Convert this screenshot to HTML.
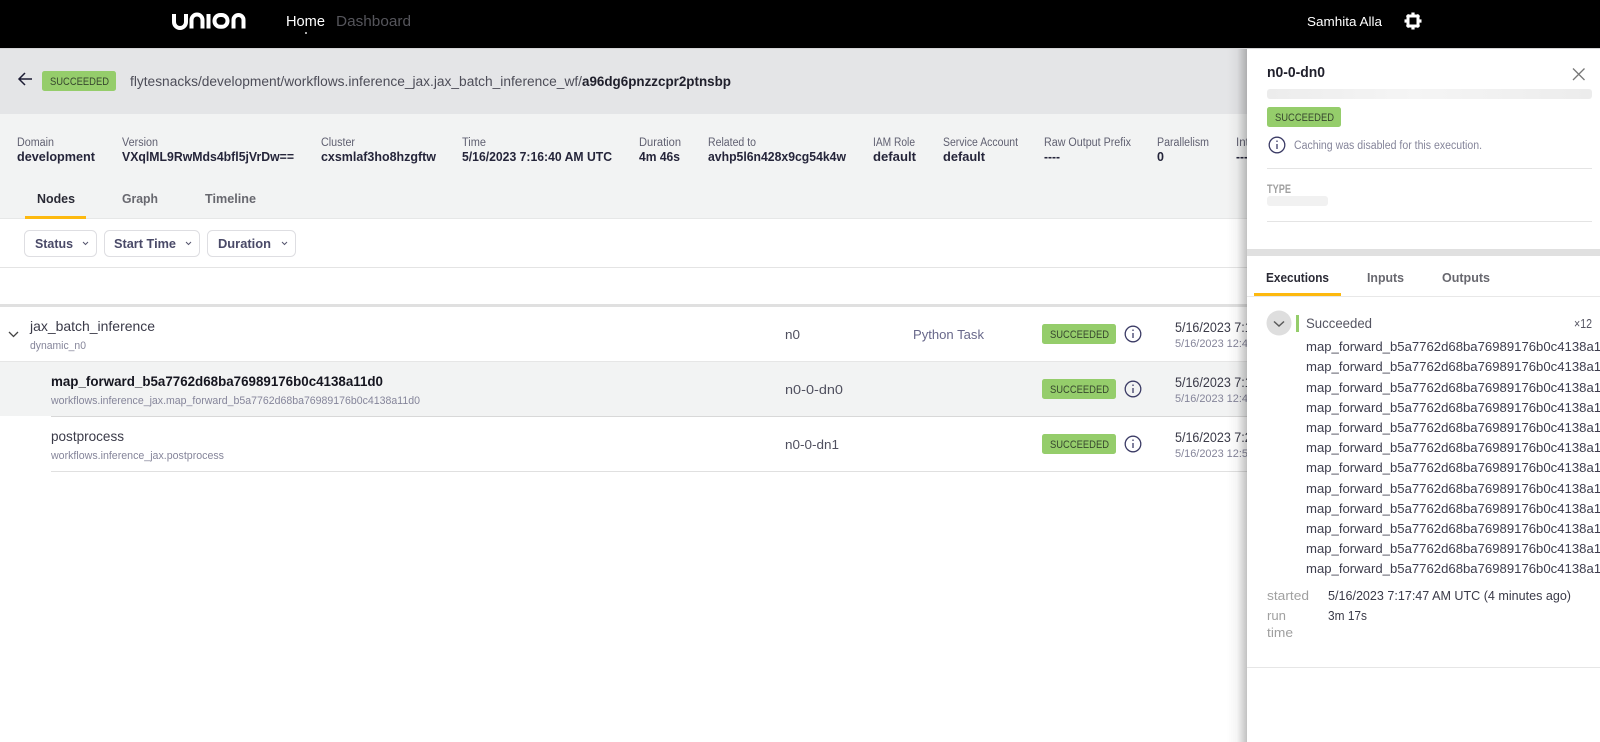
<!DOCTYPE html>
<html lang="en"><head><meta charset="utf-8"><title>Union</title>
<style>
html,body{margin:0;padding:0;width:1600px;height:742px;overflow:hidden;background:#fff}
svg{display:block;filter:blur(.3px)}
text{font-family:"Liberation Sans",sans-serif;white-space:pre}
.lb{font-size:11.5px;fill:#5f5f70}
.v{font-size:12.5px;font-weight:bold;fill:#25253a}
.tab{font-size:13px;font-weight:bold;fill:#68686f}
.fl{font-size:13px;font-weight:bold;fill:#4a4a68}
.bd{font-size:11px;fill:#37472e}
.nm{font-size:14px;fill:#3a3a48}
.sub{font-size:11px;fill:#85859a}
.id{font-size:13px;fill:#50505f}
.dt{font-size:13.5px;fill:#3a3a48}
.ex{font-size:13px;fill:#3d3d4d}
</style></head><body>
<svg width="1600" height="742" viewBox="0 0 1600 742" xmlns="http://www.w3.org/2000/svg">
<defs>
<linearGradient id="sh" x1="0" x2="1" y1="0" y2="0"><stop offset="0" stop-color="#000" stop-opacity="0"/><stop offset=".5" stop-color="#000" stop-opacity=".04"/><stop offset="1" stop-color="#000" stop-opacity=".24"/></linearGradient>
<linearGradient id="sk" x1="0" x2="1" y1="0" y2="0"><stop offset="0" stop-color="#ececec"/><stop offset=".45" stop-color="#f5f5f5"/><stop offset="1" stop-color="#ececec"/></linearGradient>
<clipPath id="pc"><rect x="1247" y="48" width="353" height="694"/></clipPath>
</defs>
<rect width="1600" height="742" fill="#fff"/>
<rect y="48" width="1600" height="66" fill="#e4e5e7"/>
<rect y="114" width="1600" height="105" fill="#f2f3f3"/>
<rect y="218" width="1600" height="1" fill="#e6e7e7"/>

<!-- header row -->
<path d="M32 79H19M25 73l-6 6 6 6" fill="none" stroke="#1c1c34" stroke-width="1.5"/>
<rect x="42" y="71" width="74" height="20" rx="2.5" fill="#95cd6b"/>
<text class="bd" x="50" y="85" textLength="59" lengthAdjust="spacingAndGlyphs">SUCCEEDED</text>
<text x="130" y="86" font-size="13.5" fill="#4d4d58" textLength="452" lengthAdjust="spacingAndGlyphs">flytesnacks/development/workflows.inference_jax.jax_batch_inference_wf/</text>
<text x="582" y="86" font-size="13.5" font-weight="bold" fill="#20202c" textLength="149" lengthAdjust="spacingAndGlyphs">a96dg6pnzzcpr2ptnsbp</text>

<!-- meta -->
<text class="lb" x="17" y="146" textLength="37" lengthAdjust="spacingAndGlyphs">Domain</text>
<text class="v" x="17" y="161" textLength="78" lengthAdjust="spacingAndGlyphs">development</text>
<text class="lb" x="122" y="146" textLength="36" lengthAdjust="spacingAndGlyphs">Version</text>
<text class="v" x="122" y="161" textLength="172" lengthAdjust="spacingAndGlyphs">VXqlML9RwMds4bfl5jVrDw==</text>
<text class="lb" x="321" y="146" textLength="34" lengthAdjust="spacingAndGlyphs">Cluster</text>
<text class="v" x="321" y="161" textLength="115" lengthAdjust="spacingAndGlyphs">cxsmlaf3ho8hzgftw</text>
<text class="lb" x="462" y="146" textLength="24" lengthAdjust="spacingAndGlyphs">Time</text>
<text class="v" x="462" y="161" textLength="150" lengthAdjust="spacingAndGlyphs">5/16/2023 7:16:40 AM UTC</text>
<text class="lb" x="639" y="146" textLength="42" lengthAdjust="spacingAndGlyphs">Duration</text>
<text class="v" x="639" y="161" textLength="41" lengthAdjust="spacingAndGlyphs">4m 46s</text>
<text class="lb" x="708" y="146" textLength="48" lengthAdjust="spacingAndGlyphs">Related to</text>
<text class="v" x="708" y="161" textLength="138" lengthAdjust="spacingAndGlyphs">avhp5l6n428x9cg54k4w</text>
<text class="lb" x="873" y="146" textLength="42" lengthAdjust="spacingAndGlyphs">IAM Role</text>
<text class="v" x="873" y="161" textLength="43" lengthAdjust="spacingAndGlyphs">default</text>
<text class="lb" x="943" y="146" textLength="75" lengthAdjust="spacingAndGlyphs">Service Account</text>
<text class="v" x="943" y="161" textLength="42" lengthAdjust="spacingAndGlyphs">default</text>
<text class="lb" x="1044" y="146" textLength="87" lengthAdjust="spacingAndGlyphs">Raw Output Prefix</text>
<text class="v" x="1044" y="161" textLength="16" lengthAdjust="spacingAndGlyphs">----</text>
<text class="lb" x="1157" y="146" textLength="52" lengthAdjust="spacingAndGlyphs">Parallelism</text>
<text class="v" x="1157" y="161">0</text>
<text class="lb" x="1236" y="146">Int</text>
<text class="v" x="1236" y="161" textLength="16" lengthAdjust="spacingAndGlyphs">----</text>

<!-- tabs -->
<text class="tab" x="37" y="203" style="fill:#2a2a35" textLength="38" lengthAdjust="spacingAndGlyphs">Nodes</text>
<text class="tab" x="122" y="203" textLength="36" lengthAdjust="spacingAndGlyphs">Graph</text>
<text class="tab" x="205" y="203" textLength="51" lengthAdjust="spacingAndGlyphs">Timeline</text>
<rect x="25" y="216" width="61" height="3" fill="#fdb90f"/>

<!-- filters -->
<g fill="#fff" stroke="#dedee2"><rect x="24.5" y="230.5" width="72" height="26" rx="5"/><rect x="104.5" y="230.5" width="95" height="26" rx="5"/><rect x="207.5" y="230.5" width="88" height="26" rx="5"/></g>
<text class="fl" x="35" y="248" textLength="38" lengthAdjust="spacingAndGlyphs">Status</text>
<text class="fl" x="114" y="248" textLength="62" lengthAdjust="spacingAndGlyphs">Start Time</text>
<text class="fl" x="218" y="248" textLength="53" lengthAdjust="spacingAndGlyphs">Duration</text>
<g fill="none" stroke="#55556e" stroke-width="1"><path d="M83 242l2.5 2.5L88 242"/><path d="M186 242l2.5 2.5L191 242"/><path d="M282 242l2.5 2.5L287 242"/></g>

<rect y="267" width="1600" height="1" fill="#e4e4e4"/>
<rect y="304" width="1600" height="3" fill="#e0e0e0"/>

<!-- rows -->
<rect y="362" width="1600" height="54" fill="#f2f3f3"/>
<rect y="361" width="1600" height="1" fill="#e6e6e6"/>
<rect x="51" y="416" width="1549" height="1" fill="#d8d8d8"/>
<rect x="51" y="471" width="1549" height="1" fill="#e0e0e0"/>
<path d="M9 332l4.500 4.500L18 332" fill="none" stroke="#444" stroke-width="1.3"/>

<text class="nm" x="30" y="331" textLength="125" lengthAdjust="spacingAndGlyphs">jax_batch_inference</text>
<text class="sub" x="30" y="349" textLength="56" lengthAdjust="spacingAndGlyphs">dynamic_n0</text>
<text class="nm" x="51" y="386" font-weight="bold" style="fill:#15151f" textLength="332" lengthAdjust="spacingAndGlyphs">map_forward_b5a7762d68ba76989176b0c4138a11d0</text>
<text class="sub" x="51" y="404" textLength="369" lengthAdjust="spacingAndGlyphs">workflows.inference_jax.map_forward_b5a7762d68ba76989176b0c4138a11d0</text>
<text class="nm" x="51" y="441" textLength="73" lengthAdjust="spacingAndGlyphs">postprocess</text>
<text class="sub" x="51" y="459" textLength="173" lengthAdjust="spacingAndGlyphs">workflows.inference_jax.postprocess</text>

<text class="id" x="785" y="339" textLength="15" lengthAdjust="spacingAndGlyphs">n0</text>
<text class="id" x="785" y="394" textLength="58" lengthAdjust="spacingAndGlyphs">n0-0-dn0</text>
<text class="id" x="785" y="449" textLength="54" lengthAdjust="spacingAndGlyphs">n0-0-dn1</text>
<text x="913" y="339" font-size="13" fill="#68688a" textLength="71" lengthAdjust="spacingAndGlyphs">Python Task</text>

<g fill="#95cd6b"><rect x="1042" y="324" width="74" height="20" rx="2.500"/><rect x="1042" y="379" width="74" height="20" rx="2.500"/><rect x="1042" y="434" width="74" height="20" rx="2.500"/></g>
<text class="bd" x="1050" y="338" textLength="59" lengthAdjust="spacingAndGlyphs">SUCCEEDED</text>
<text class="bd" x="1050" y="393" textLength="59" lengthAdjust="spacingAndGlyphs">SUCCEEDED</text>
<text class="bd" x="1050" y="448" textLength="59" lengthAdjust="spacingAndGlyphs">SUCCEEDED</text>
<g fill="none" stroke="#3c3c66" stroke-width="1.300">
<circle cx="1133" cy="334" r="7.800"/><path d="M1133 333v5M1133 329.500v1.500"/>
<circle cx="1133" cy="389" r="7.800"/><path d="M1133 388v5M1133 384.500v1.500"/>
<circle cx="1133" cy="444" r="7.800"/><path d="M1133 443v5M1133 439.500v1.500"/>
</g>
<text class="dt" x="1175" y="332" textLength="152" lengthAdjust="spacingAndGlyphs">5/16/2023 7:16:40 AM UTC</text>
<text class="sub" x="1175" y="347" textLength="138" lengthAdjust="spacingAndGlyphs">5/16/2023 12:46:40 AM PDT</text>
<text class="dt" x="1175" y="387" textLength="152" lengthAdjust="spacingAndGlyphs">5/16/2023 7:17:47 AM UTC</text>
<text class="sub" x="1175" y="402" textLength="138" lengthAdjust="spacingAndGlyphs">5/16/2023 12:47:47 AM PDT</text>
<text class="dt" x="1175" y="442" textLength="152" lengthAdjust="spacingAndGlyphs">5/16/2023 7:21:04 AM UTC</text>
<text class="sub" x="1175" y="457" textLength="138" lengthAdjust="spacingAndGlyphs">5/16/2023 12:51:04 AM PDT</text>

<!-- panel shadow + panel -->
<rect x="1227" y="48" width="20" height="694" fill="url(#sh)"/>
<rect x="1247" y="48" width="353" height="694" fill="#fff"/>

<text x="1267" y="77" font-size="14.500" font-weight="bold" fill="#1f1f2b" textLength="58" lengthAdjust="spacingAndGlyphs">n0-0-dn0</text>
<path d="M1573 68.500l11.500 11.500M1584.500 68.500L1573 80" stroke="#777" stroke-width="1.300" fill="none"/>
<rect x="1267" y="89" width="325" height="10" rx="3" fill="url(#sk)"/>
<rect x="1267" y="107" width="74" height="20" rx="2.500" fill="#95cd6b"/>
<text class="bd" x="1275" y="121" textLength="59" lengthAdjust="spacingAndGlyphs">SUCCEEDED</text>
<circle cx="1277" cy="145" r="7.800" fill="none" stroke="#3c3c66" stroke-width="1.300"/>
<path d="M1277 144v5M1277 140.500v1.500" stroke="#3c3c66" stroke-width="1.300" fill="none"/>
<text x="1294" y="149" font-size="11.500" fill="#85859a" textLength="188" lengthAdjust="spacingAndGlyphs">Caching was disabled for this execution.</text>
<rect x="1267" y="168" width="325" height="1" fill="#e4e4e4"/>
<text x="1267" y="193" font-size="11.500" font-weight="bold" fill="#a0a0a0" textLength="24" lengthAdjust="spacingAndGlyphs">TYPE</text>
<rect x="1267" y="196" width="61" height="10" rx="3" fill="#f1f1f1"/>
<rect x="1267" y="221" width="325" height="1" fill="#e4e4e4"/>
<rect x="1247" y="249" width="353" height="7" fill="#e0e0e0"/>

<text class="tab" x="1266" y="282" style="fill:#2a2a35" textLength="63" lengthAdjust="spacingAndGlyphs">Executions</text>
<text class="tab" x="1367" y="282" textLength="37" lengthAdjust="spacingAndGlyphs">Inputs</text>
<text class="tab" x="1442" y="282" textLength="48" lengthAdjust="spacingAndGlyphs">Outputs</text>
<rect x="1247" y="296" width="353" height="1" fill="#e8e8e8"/>
<rect x="1254" y="293" width="87" height="3" fill="#fdb90f"/>

<circle cx="1279" cy="323" r="12.500" fill="#dedede"/>
<path d="M1274 321.500l5 4.500 5-4.500" fill="none" stroke="#5a5a5a" stroke-width="1.500"/>
<rect x="1296" y="315" width="3" height="17" fill="#95cd6b"/>
<text x="1306" y="328" font-size="13.500" fill="#555562" textLength="66" lengthAdjust="spacingAndGlyphs">Succeeded</text>
<text x="1574" y="328" font-size="13" fill="#555562" textLength="18" lengthAdjust="spacingAndGlyphs">×12</text>

<g clip-path="url(#pc)">
<text class="ex" x="1306" y="351" textLength="316" lengthAdjust="spacingAndGlyphs">map_forward_b5a7762d68ba76989176b0c4138a11d0</text>
<text class="ex" x="1306" y="371" textLength="316" lengthAdjust="spacingAndGlyphs">map_forward_b5a7762d68ba76989176b0c4138a11d0</text>
<text class="ex" x="1306" y="392" textLength="316" lengthAdjust="spacingAndGlyphs">map_forward_b5a7762d68ba76989176b0c4138a11d0</text>
<text class="ex" x="1306" y="412" textLength="316" lengthAdjust="spacingAndGlyphs">map_forward_b5a7762d68ba76989176b0c4138a11d0</text>
<text class="ex" x="1306" y="432" textLength="316" lengthAdjust="spacingAndGlyphs">map_forward_b5a7762d68ba76989176b0c4138a11d0</text>
<text class="ex" x="1306" y="452" textLength="316" lengthAdjust="spacingAndGlyphs">map_forward_b5a7762d68ba76989176b0c4138a11d0</text>
<text class="ex" x="1306" y="472" textLength="316" lengthAdjust="spacingAndGlyphs">map_forward_b5a7762d68ba76989176b0c4138a11d0</text>
<text class="ex" x="1306" y="493" textLength="316" lengthAdjust="spacingAndGlyphs">map_forward_b5a7762d68ba76989176b0c4138a11d0</text>
<text class="ex" x="1306" y="513" textLength="316" lengthAdjust="spacingAndGlyphs">map_forward_b5a7762d68ba76989176b0c4138a11d0</text>
<text class="ex" x="1306" y="533" textLength="316" lengthAdjust="spacingAndGlyphs">map_forward_b5a7762d68ba76989176b0c4138a11d0</text>
<text class="ex" x="1306" y="553" textLength="316" lengthAdjust="spacingAndGlyphs">map_forward_b5a7762d68ba76989176b0c4138a11d0</text>
<text class="ex" x="1306" y="573" textLength="316" lengthAdjust="spacingAndGlyphs">map_forward_b5a7762d68ba76989176b0c4138a11d0</text>
</g>

<text x="1267" y="600" font-size="13" fill="#a0a0a0" textLength="42" lengthAdjust="spacingAndGlyphs">started</text>
<text x="1328" y="600" font-size="13" fill="#3a3a48" textLength="243" lengthAdjust="spacingAndGlyphs">5/16/2023 7:17:47 AM UTC (4 minutes ago)</text>
<text x="1267" y="620" font-size="13" fill="#a0a0a0" textLength="19" lengthAdjust="spacingAndGlyphs">run</text>
<text x="1328" y="620" font-size="13" fill="#3a3a48" textLength="39" lengthAdjust="spacingAndGlyphs">3m 17s</text>
<text x="1267" y="637" font-size="13" fill="#a0a0a0" textLength="26" lengthAdjust="spacingAndGlyphs">time</text>
<rect x="1247" y="667" width="353" height="1" fill="#e6e6e6"/>

<!-- nav -->
<rect width="1600" height="48" fill="#000"/>
<rect y="48" width="1600" height="1" fill="#d4d4d6"/>
<g fill="none" stroke="#fff" stroke-width="4" transform="translate(-.8 0)">
<path d="M174.800 14v8a6 6 0 0 0 12 0v-8"/>
<path d="M192.300 28.500v-8.500a5.500 5.500 0 0 1 11 0v8.500"/>
<path d="M209.300 14v14.500"/>
<rect x="215.300" y="15" width="13" height="11.800" rx="5.700"/>
<path d="M234.300 28.500v-8.500a5 5 0 0 1 10 0v8.500"/>
</g>
<text x="286" y="26" font-size="14.500" fill="#fff" textLength="39" lengthAdjust="spacingAndGlyphs">Home</text>
<text x="336" y="26" font-size="14.500" fill="#55555b" textLength="75" lengthAdjust="spacingAndGlyphs">Dashboard</text>
<circle cx="306" cy="33" r="1" fill="#ddd"/>
<text x="1307" y="26" font-size="13" fill="#fff" textLength="75" lengthAdjust="spacingAndGlyphs">Samhita Alla</text>
<g transform="translate(1413 21)">
<rect x="-6.500" y="-6.500" width="13" height="13" rx="2" fill="#fff"/>
<g stroke="#fff" stroke-width="3.200">
<path d="M0-8.500V8.500M-8.500 0H8.500M-6-6L6 6M-6 6L6-6"/>
</g>
<rect x="-3.500" y="-3.500" width="7" height="7" fill="#000"/>
</g>
</svg>
</body></html>
